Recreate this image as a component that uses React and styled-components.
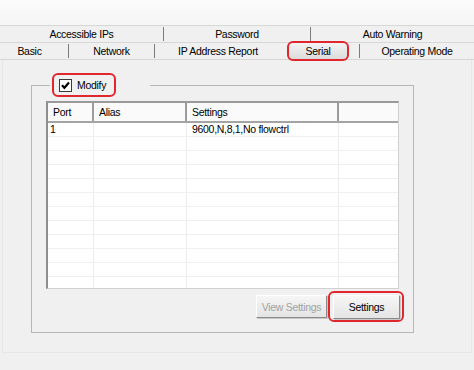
import * as React from 'react'
import styled, { createGlobalStyle } from 'styled-components'

const GlobalStyle = createGlobalStyle`
  html, body {
    margin: 0;
    padding: 0;
    background: #f0f0f0;
  }
  body {
    font-family: "Liberation Sans", Arial, sans-serif;
    font-size: 10.5px;
    letter-spacing: -0.3px;
    color: #000;
  }
`

const Window = styled.div`
  width: 474px;
  height: 370px;
  overflow: hidden;
  display: flex;
  flex-direction: column;
  background: #f0f0f0;
`

const TopSpace = styled.div`
  height: 25px;
  background: linear-gradient(#fbfbfb, #f5f5f5);
`

const TabRow = styled.div`
  display: flex;
  align-items: center;
  height: 16px;
  border-top: 1px solid #d7d7d7;
  ${p => p.last && 'border-bottom: 1px solid #d7d7d7;'}
`

const Tab = styled.div`
  width: ${p => (p.w ? `${p.w}px` : 'auto')};
  flex: ${p => (p.w ? 'none' : 1)};
  box-sizing: border-box;
  padding-right: ${p => p.pr || 0}px;
  text-align: center;
  white-space: nowrap;
  line-height: 16px;
`

const Sep = styled.div`
  width: 1px;
  height: 14px;
  background: #7d7d7d;
  flex: none;
`

const Gap = styled.div`
  width: ${p => p.w}px;
  flex: none;
`

const SelectedTab = styled.div`
  position: relative;
  z-index: 1;
  width: 62px;
  height: 20px;
  flex: none;
  box-sizing: border-box;
  display: flex;
  align-items: center;
  justify-content: center;
  border: 2px solid #e1272e;
  border-radius: 6px;
  background: linear-gradient(#f3f3f3, #dcdcdc);
`

const Panel = styled.div`
  margin: 0 2px;
  height: 292px;
  border: 1px solid #e7e7e7;
  border-top: none;
  background: #f0f0f0;
`

const GroupBox = styled.fieldset`
  margin: 13px 0 0 28px;
  width: 383px;
  box-sizing: border-box;
  padding: 4px 14px 10px 14px;
  border: 1px solid #b7b7b7;
  min-width: 0;
`

const Legend = styled.legend`
  margin-left: 4px;
  padding: 0 34px 0 2px;
`

const Highlight = styled.div`
  display: flex;
  align-items: center;
  gap: 5px;
  height: 24px;
  box-sizing: border-box;
  padding: 0 8px 0 5px;
  border: 2px solid #e1272e;
  border-radius: 6px;
`

const ListView = styled.div`
  height: 188px;
  box-sizing: border-box;
  overflow: hidden;
  background: #fff;
  border: 1px solid #d0d0d0;
  border-left: 2px solid #8e8e8e;
  border-top: 2px solid #9a9a9a;
`

const cols = '46px 93px 152px 1fr'

const HeaderRow = styled.div`
  display: grid;
  grid-template-columns: ${cols};
  height: 18px;
  background: #fafafa;
  border-bottom: 2px solid #a4a4a4;
`

const HeaderCell = styled.div`
  padding-left: 5px;
  line-height: 18px;
  border-right: 2px solid #9c9c9c;
  white-space: nowrap;
  &:last-child {
    border-right: none;
  }
`

const Row = styled.div`
  display: grid;
  grid-template-columns: ${cols};
  height: 13px;
  border-bottom: 1px solid #f0f0f0;
`

const Cell = styled.div`
  padding-left: 5px;
  line-height: 13px;
  border-right: 1px solid #ececec;
  white-space: nowrap;
  overflow: hidden;
  &:first-child {
    padding-left: 2px;
  }
  &:last-child {
    border-right: none;
  }
`

const ButtonRow = styled.div`
  display: flex;
  justify-content: flex-end;
  align-items: center;
  gap: 1px;
  margin: 2px -5px 0 0;
`

const ButtonFrame = styled.div`
  padding: 2px 2px 1px 3px;
  border: 2px solid #e1272e;
  border-radius: 6px;
`

const Button = styled.button`
  width: ${p => p.w}px;
  height: ${p => p.h}px;
  padding: 0;
  font: inherit;
  letter-spacing: inherit;
  color: ${p => (p.disabled ? '#a3a3a3' : '#000')};
  background: linear-gradient(#f6f6f6, #e4e4e4);
  border: 1px solid #fff;
  border-right-color: #8a8a8a;
  border-bottom-color: #8a8a8a;
  box-shadow: 1px 1px 0 #c8c8c8;
  border-radius: 1px;
`

const Checkbox = () => (
  <svg width="13" height="13" viewBox="0 0 13 13">
    <rect x="0.5" y="0.5" width="12" height="12" fill="#fff" stroke="#3a3a3a" />
    <path d="M3 6.2 L5.4 8.8 L10 3.6" fill="none" stroke="#000" strokeWidth="2.2" />
  </svg>
)

const rows = [{ port: '1', alias: '', settings: '9600,N,8,1,No flowctrl' }]
while (rows.length < 14) rows.push({ port: '', alias: '', settings: '' })

export default function App() {
  return (
    <Window>
      <GlobalStyle />
      <TopSpace />
      <TabRow>
        <Tab w={163}>Accessible IPs</Tab>
        <Sep />
        <Tab w={146}>Password</Tab>
        <Sep />
        <Tab>Auto Warning</Tab>
      </TabRow>
      <TabRow last>
        <Tab w={68} pr={9}>Basic</Tab>
        <Sep />
        <Tab w={85}>Network</Tab>
        <Sep />
        <Tab w={132} pr={6}>IP Address Report</Tab>
        <SelectedTab>Serial</SelectedTab>
        <Gap w={10} />
        <Sep />
        <Tab>Operating Mode</Tab>
      </TabRow>
      <Panel>
        <GroupBox>
          <Legend>
            <Highlight>
              <Checkbox />
              Modify
            </Highlight>
          </Legend>
          <ListView>
            <HeaderRow>
              <HeaderCell>Port</HeaderCell>
              <HeaderCell>Alias</HeaderCell>
              <HeaderCell>Settings</HeaderCell>
              <HeaderCell />
            </HeaderRow>
            {rows.map((r, i) => (
              <Row key={i}>
                <Cell>{r.port}</Cell>
                <Cell>{r.alias}</Cell>
                <Cell>{r.settings}</Cell>
                <Cell />
              </Row>
            ))}
          </ListView>
          <ButtonRow>
            <Button w={71} h={23} disabled>
              View Settings
            </Button>
            <ButtonFrame>
              <Button w={67} h={24}>
                Settings
              </Button>
            </ButtonFrame>
          </ButtonRow>
        </GroupBox>
      </Panel>
    </Window>
  )
}
